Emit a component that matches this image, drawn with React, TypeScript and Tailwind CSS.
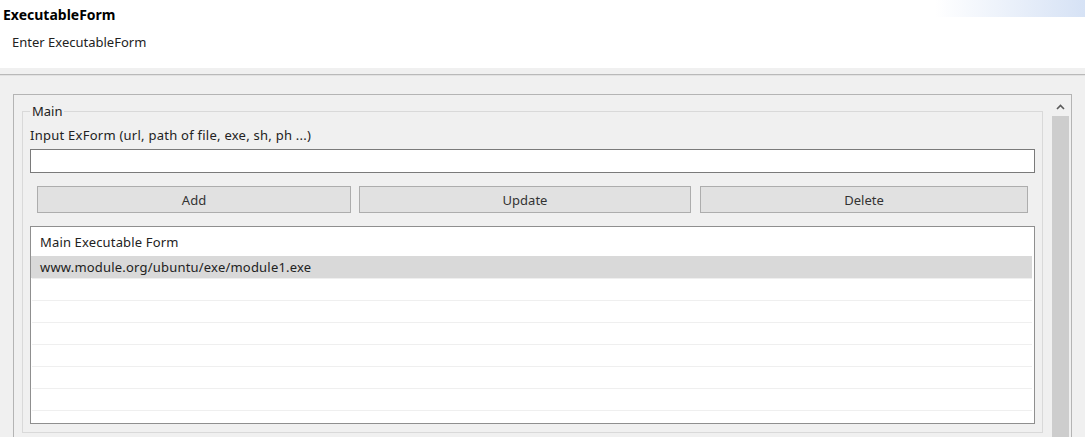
import React from "react";

const font = { fontFamily: '"Noto Sans", "Open Sans", sans-serif' };

export default function App() {
  const emptyRows = [0, 1, 2, 3, 4, 5, 6];
  return (
    <div
      className="w-[1085px] h-[437px] overflow-hidden bg-[#f0f0f0] text-[13px] leading-[16px] text-[#1f1f1f]"
      style={font}
    >
      {/* Header */}
      <div className="relative h-[68px] bg-white">
        <div className="absolute right-0 top-0 h-[17px] w-[150px] bg-linear-to-r from-white to-[#d6e2f5]" />
        <div className="pl-[3px] pt-[7px] text-[14px] font-bold text-black">ExecutableForm</div>
        <div className="pl-[12px] pt-[11px] text-[#222]">Enter ExecutableForm</div>
      </div>
      <div className="h-[6px]" />
      <div className="h-[1px] bg-[#b9b9b9]" />
      <div className="h-[1px] bg-[#e2e2e2]" />

      {/* Body */}
      <div className="pl-[13px] pr-[13px] pt-[18px]">
        <div className="flex h-[360px] border border-[#b4b4b4] pl-[8px] pt-[8px]">
          <fieldset className="w-[1021px] h-[330px] border border-[#d9d9d9] px-[7px] pb-[8px]">
            <legend className="px-[2px] text-[#222]">Main</legend>
            <div className="mt-[8px] text-[#222] tracking-[0.25px]">Input ExForm (url, path of file, exe, sh, ph ...)</div>
            <div className="mt-[6px] h-[24px] border border-[#7a7a7a] bg-white" />
            <div className="mt-[13px] flex px-[7px]">
              <button className="h-[27px] w-[314px] border border-[#adadad] bg-[#e1e1e1] text-[#333]">Add</button>
              <button className="ml-[8px] h-[27px] w-[332px] border border-[#adadad] bg-[#e1e1e1] text-[#333]">Update</button>
              <button className="ml-[9px] h-[27px] w-[328px] border border-[#adadad] bg-[#e1e1e1] text-[#333]">Delete</button>
            </div>
            <div className="mt-[13px] h-[198px] overflow-hidden border border-[#8f8f8f] bg-white pr-[2px]">
              <div className="flex h-[29px] items-center pl-[9px] tracking-[0.15px] text-[#222]">Main Executable Form</div>
              <div className="flex h-[22px] items-center bg-[#d9d9d9] pl-[9px] tracking-[0.2px] text-[#222]">
                www.module.org/ubuntu/exe/module1.exe
              </div>
              {emptyRows.map((i) => (
                <div key={i} className="ml-[1px] h-[22px] border-t border-[#efefef]" />
              ))}
            </div>
          </fieldset>
          <div className="ml-[9px] mt-[-5px] flex w-[17px] flex-col">
            <div className="flex h-[18px] items-center justify-center">
              <svg width="9" height="6" viewBox="0 0 9 6">
                <path d="M1 5 L4.5 1.5 L8 5" stroke="#5a5a5a" strokeWidth="1.6" fill="none" />
              </svg>
            </div>
            <div className="flex-1 bg-[#cdcdcd]" />
          </div>
          <div className="w-[2px]" />
        </div>
      </div>
    </div>
  );
}
